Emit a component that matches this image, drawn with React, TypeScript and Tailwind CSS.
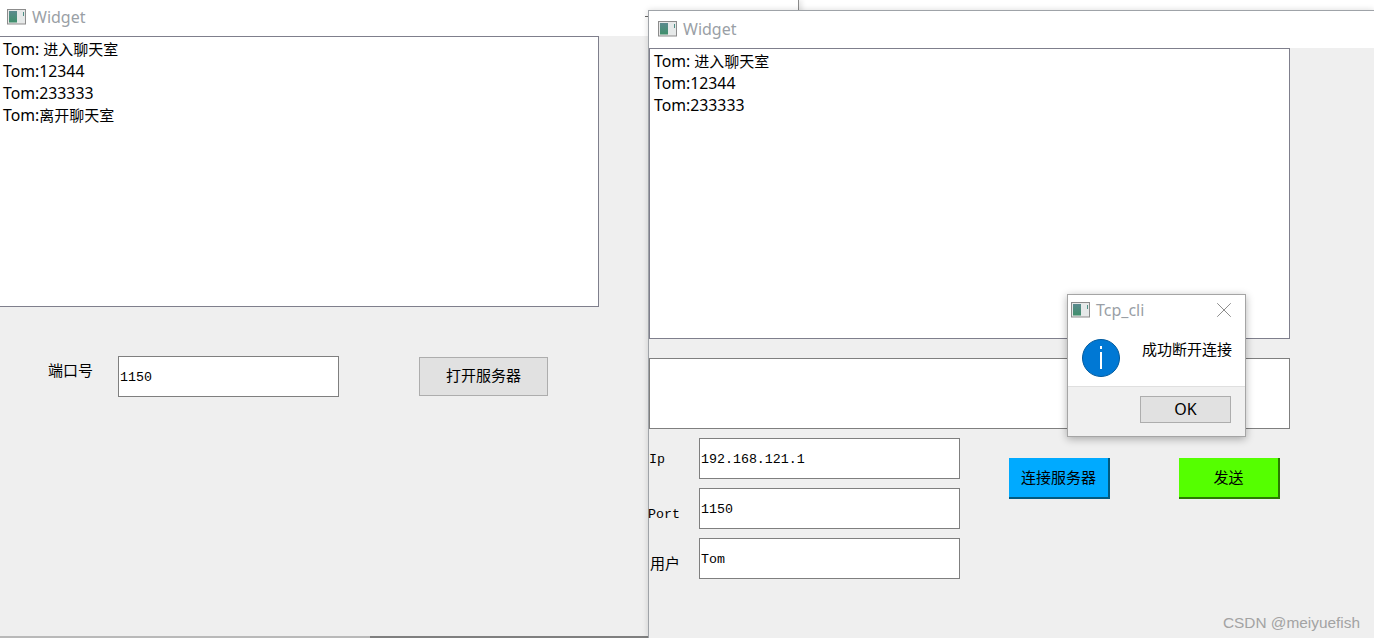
import { X } from "lucide-react";

const uiFont = "font-['Noto_Sans','Noto_Sans_CJK_SC',sans-serif]";
const bitmapFont = "font-['Liberation_Mono','Noto_Sans_CJK_SC',monospace]";
const cjkFont = "font-['Noto_Sans_CJK_SC',sans-serif]";

function WindowIcon() {
  return (
    <svg width="20" height="16" viewBox="0 0 20 16" className="shrink-0">
      <defs>
        <linearGradient id="pane" x1="0" y1="0" x2="0" y2="1">
          <stop offset="0" stopColor="#5b8a8e" />
          <stop offset="1" stopColor="#3f8f6b" />
        </linearGradient>
      </defs>
      <rect x="0.5" y="0.5" width="18" height="14.5" fill="#e8e8e8" stroke="#8c8c8c" />
      <rect x="2" y="2" width="8" height="11.5" fill="url(#pane)" />
      <rect x="10" y="2" width="7.5" height="11.5" fill="#e6e9e9" />
      <rect x="16" y="3" width="1" height="4" fill="#4f8f86" />
    </svg>
  );
}

function TitleBar({ title }: { title: string }) {
  return (
    <div className="flex items-center gap-[5px] bg-white">
      <WindowIcon />
      <span className={`${uiFont} text-[16px] leading-none text-[#9a9fa6]`}>{title}</span>
    </div>
  );
}

// latin runs are a bit larger than the chinese ones in the reference
function LogLine({ text }: { text: string }) {
  const parts = text.split(/([\u4e00-\u9fff]+)/);
  return (
    <div className="h-[22px] whitespace-pre">
      {parts.map((part, i) =>
        i % 2 === 1 ? (
          <span key={i} className="text-[15px]">
            {part}
          </span>
        ) : (
          <span key={i}>{part}</span>
        ),
      )}
    </div>
  );
}

function ChatLog({ lines }: { lines: string[] }) {
  return (
    <div className={`${uiFont} text-[15.8px] leading-[22px] text-black`}>
      {lines.map((line) => (
        <LogLine key={line} text={line} />
      ))}
    </div>
  );
}

function Field({ value }: { value: string }) {
  return (
    <div className={`${bitmapFont} flex h-[41px] w-[261px] items-center border border-[#7f7f7f] bg-white pl-[1px] pt-[2px] text-[13.3px] text-black`}>
      {value}
    </div>
  );
}

function ColorButton({ label, className }: { label: string; className: string }) {
  return (
    <div className={`${cjkFont} flex h-[41px] w-[101px] items-center justify-center border-b-2 border-r-2 pb-[1px] text-[15px] text-black ${className}`}>
      {label}
    </div>
  );
}

function ServerWindow() {
  return (
    <div className="absolute left-0 top-0 h-[638px] w-[799px] border-r border-[#8a8a8a] shadow-[3px_0_5px_rgba(0,0,0,0.1)]">
      <div className="h-[36px] bg-white pl-[7px] pt-[9px]">
        <TitleBar title="Widget" />
      </div>
      <div className="h-[602px] bg-[#efefef]">
        <div className="h-[271px] w-[599px] border-y border-r border-[#7f7f8c] bg-white pl-[3px] pt-[1px]">
          <ChatLog lines={["Tom: 进入聊天室", "Tom:12344", "Tom:233333", "Tom:离开聊天室"]} />
        </div>
        <div className="mt-[49px] flex items-center">
          <span className={`${cjkFont} ml-[48px] w-[70px] pb-[12px] text-[15px] text-black`}>端口号</span>
          <div className={`${bitmapFont} flex h-[41px] w-[221px] items-center border border-[#7f7f7f] bg-white pl-[1px] pt-[2px] text-[13.3px] text-black`}>
            1150
          </div>
          <div className={`${cjkFont} ml-[80px] flex h-[39px] w-[129px] items-center justify-center border border-[#adadad] bg-[#e1e1e1] pb-[2px] text-[15px] text-black`}>
            打开服务器
          </div>
        </div>
      </div>
      <div className="absolute left-[645px] top-[16px] h-px w-[4px] bg-[#666666]" />
      <div className="absolute bottom-0 left-0 h-[2px] w-[370px] bg-[#b9b9b9]" />
      <div className="absolute bottom-0 left-[370px] h-[2px] w-[279px] bg-[#7f7f7f]" />
    </div>
  );
}

function ClientWindow() {
  return (
    <div className="absolute left-[648px] top-[10px] h-[628px] w-[726px] border-l border-t border-[#9fa3a8] bg-[#efefef] shadow-[0_0_6px_rgba(0,0,0,0.15)]">
      <div className="h-[37px] bg-white pl-[9px] pt-[10px]">
        <TitleBar title="Widget" />
      </div>
      <div className="h-[291px] w-[641px] border border-[#7f7f8c] bg-white pl-[4px] pt-[1px]">
        <ChatLog lines={["Tom: 进入聊天室", "Tom:12344", "Tom:233333"]} />
      </div>
      <div className="mt-[19px] h-[71px] w-[641px] border border-[#7f7f7f] bg-white" />
      <div className="mt-[9px] flex">
        <div className="flex w-[50px] flex-col text-black">
          <span className={`${bitmapFont} h-[50px] pt-[12px] text-[13.3px]`}>Ip</span>
          <span className={`${bitmapFont} -ml-px h-[50px] pt-[17px] text-[13.3px]`}>Port</span>
          <span className={`${cjkFont} ml-px h-[50px] pt-[14px] text-[15px]`}>用户</span>
        </div>
        <div className="flex flex-col gap-[9px]">
          <Field value="192.168.121.1" />
          <Field value="1150" />
          <Field value="Tom" />
        </div>
        <div className="ml-[49px] mt-[20px] flex gap-[69px]">
          <ColorButton label="连接服务器" className="border-[#005a80] bg-[#00aaff]" />
          <ColorButton label="发送" className="border-[#2a7a00] bg-[#55ff00]" />
        </div>
      </div>
    </div>
  );
}

function MessageBox() {
  return (
    <div className="absolute left-[1067px] top-[294px] h-[143px] w-[179px] border border-[#a5a5a5] bg-white shadow-[0_2px_8px_rgba(0,0,0,0.3)]">
      <div className="flex h-[30px] items-center justify-between pl-[3px] pr-[8px]">
        <TitleBar title="Tcp_cli" />
        <X size={26} strokeWidth={0.9} className="text-[#8a8a8a]" />
      </div>
      <div className="flex h-[61px]">
        <svg width="38" height="38" viewBox="0 0 38 38" className="ml-[14px] mt-[14px] shrink-0">
          <circle cx="19" cy="19" r="18.5" fill="#0078d4" stroke="#005a9e" />
          <rect x="18" y="13" width="2" height="17" fill="#fff" />
          <rect x="18" y="7" width="2" height="3" fill="#fff" />
        </svg>
        <span className={`${cjkFont} ml-[22px] mt-[13px] text-[15px] leading-[22px] text-black`}>成功断开连接</span>
      </div>
      <div className="flex h-[50px] items-start justify-end border-t border-[#dfdfdf] bg-[#f0f0f0] pr-[14px] pt-[9px]">
        <div className={`${uiFont} flex h-[27px] w-[91px] items-center justify-center border border-[#adadad] bg-[#e1e1e1] pb-[2px] text-[16px] text-black`}>
          OK
        </div>
      </div>
    </div>
  );
}

export default function App() {
  return (
    <div className="relative h-[638px] w-[1374px] overflow-hidden bg-white">
      <ServerWindow />
      <ClientWindow />
      <MessageBox />
      <span className="absolute right-[14px] top-[611px] font-['Liberation_Sans',sans-serif] text-[15.4px] text-[#a3a3a3]">
        CSDN @meiyuefish
      </span>
    </div>
  );
}
